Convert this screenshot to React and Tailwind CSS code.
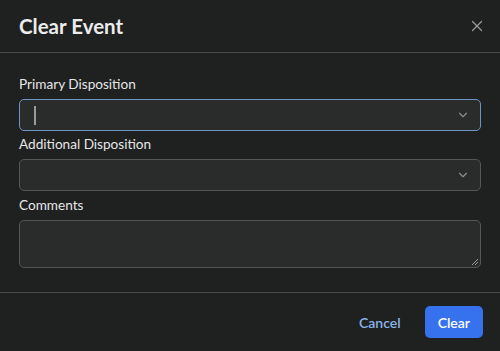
import { X, ChevronDown } from 'lucide-react';

function SelectBox({ focused }) {
  return (
    <div
      className={`flex h-[32px] items-center justify-between rounded-[5px] border bg-[#2a2b2b] pl-[14px] pr-[10px] ${
        focused ? 'border-[#6f94c4]' : 'border-[#555656]'
      }`}
    >
      {focused ? <span className="h-[19px] w-[2px] bg-[#9a9a9a]"></span> : <span></span>}
      <ChevronDown size={14} strokeWidth={2} className="text-[#8c8c8c]" />
    </div>
  );
}

export default function App() {
  return (
    <div className="flex h-[351px] w-[500px] flex-col bg-[#1f2020] font-['Lato',sans-serif] text-[#e6e6e6]">
      <div className="flex h-[53px] items-center justify-between border-b border-[#4a4a4a] pl-[19px] pr-[14px]">
        <h1 className="text-[20.5px] font-bold text-[#ececec]">Clear Event</h1>
        <X size={18} strokeWidth={1.6} className="text-[#9c9c9c]" />
      </div>

      <div className="flex flex-1 flex-col px-[19px] pt-[23px]">
        <label className="mb-[6px] text-[13.6px] leading-[17px]">Primary Disposition</label>
        <SelectBox focused />

        <label className="mb-[6px] mt-[5px] text-[13.6px] leading-[17px]">Additional Disposition</label>
        <SelectBox />

        <label className="mb-[6px] mt-[6px] text-[13.6px] leading-[17px]">Comments</label>
        <div className="relative h-[48px] rounded-[5px] border border-[#555656] bg-[#2a2b2b]">
          <svg className="absolute bottom-[2px] right-[2px]" width="6" height="6" viewBox="0 0 6 6">
            <path d="M6 0 L0 6 M6 3 L3 6" stroke="#9a9a9a" strokeWidth="1" />
          </svg>
        </div>
      </div>

      <div className="flex h-[59px] items-center justify-end gap-[24px] border-t border-[#4a4a4a] pr-[17px]">
        <button className="text-[14px] font-semibold text-[#8ab6e8]">Cancel</button>
        <button className="h-[32px] rounded-[5px] bg-[#3671ee] px-[13px] text-[14px] font-semibold text-white">
          Clear
        </button>
      </div>
    </div>
  );
}
